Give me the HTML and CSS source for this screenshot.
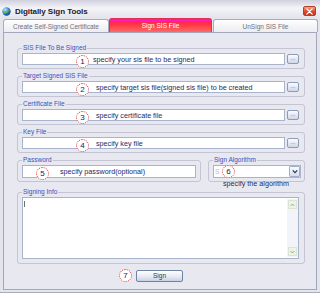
FILE: index.html
```html
<!DOCTYPE html>
<html>
<head>
<meta charset="utf-8">
<link rel="stylesheet" href="styles.css">
</head>
<body>
<div class="window">
  <div class="titlebar">
    <svg class="app-icon" viewBox="0 0 10 10" width="9" height="9">
      <defs>
        <radialGradient id="g1" cx="35%" cy="30%" r="75%">
          <stop offset="0" stop-color="#c8e8ff"/>
          <stop offset="0.6" stop-color="#2a78d0"/>
          <stop offset="1" stop-color="#12408a"/>
        </radialGradient>
      </defs>
      <circle cx="5" cy="5" r="4.6" fill="url(#g1)"/>
      <path d="M1.2 6.5 C3 4.5 5.5 4 8.8 3.2 C7 5.2 4.5 6.8 1.8 7.6 Z" fill="#5cc040"/>
    </svg>
    <span class="title">Digitally Sign Tools</span>
    <span class="close">
      <svg viewBox="0 0 10 8" width="9" height="7"><path d="M2 1 L8 7 M8 1 L2 7" stroke="#fff" stroke-width="1.6" stroke-linecap="round"/></svg>
    </span>
  </div>
  <div class="tabs">
    <div class="tab tab-first">Create Self-Signed Certificate</div>
    <div class="tab active">Sign SIS File</div>
    <div class="tab tab-last">UnSign SIS File</div>
  </div>
  <div class="panel">
    <fieldset class="group">
      <legend>SIS File To Be Signed</legend>
      <div class="row">
        <div class="textbox"><span class="num">1</span><span class="hint">specify your sis file to be signed</span></div>
        <span class="browse">...</span>
      </div>
    </fieldset>
    <fieldset class="group">
      <legend>Target Signed SIS File</legend>
      <div class="row">
        <div class="textbox"><span class="num">2</span><span class="hint hint-wide">specify target sis file(signed sis file) to be created</span></div>
        <span class="browse">...</span>
      </div>
    </fieldset>
    <fieldset class="group">
      <legend>Certificate File</legend>
      <div class="row">
        <div class="textbox"><span class="num">3</span><span class="hint hint-wide">specify certificate file</span></div>
        <span class="browse">...</span>
      </div>
    </fieldset>
    <fieldset class="group">
      <legend>Key File</legend>
      <div class="row">
        <div class="textbox"><span class="num">4</span><span class="hint hint-wide">specify key file</span></div>
        <span class="browse">...</span>
      </div>
    </fieldset>
    <div class="pair">
      <fieldset class="group pw">
        <legend>Password</legend>
        <div class="textbox tall pw-box"><span class="num">5</span><span class="hint pw-hint">specify password(optional)</span></div>
      </fieldset>
      <fieldset class="group algo">
        <legend>Sign Algorithm</legend>
        <div class="combo">
          <span class="combo-text">S</span>
          <span class="num num-over">6</span>
          <span class="drop">
            <svg viewBox="0 0 8 6" width="6" height="5"><path d="M1 1.5 L4 4.5 L7 1.5" fill="none" stroke="#203050" stroke-width="1.5"/></svg>
          </span>
        </div>
        <div class="algo-note">specify the algorithm</div>
      </fieldset>
    </div>
    <fieldset class="group info">
      <legend>Signing Info</legend>
      <div class="textarea">
        <span class="caret"></span>
        <div class="scrollbar">
          <span class="sb-btn">
            <svg viewBox="0 0 8 6" width="5" height="4"><path d="M1 4.5 L4 1.5 L7 4.5" fill="none" stroke="#8a9a80" stroke-width="1.4"/></svg>
          </span>
          <span class="sb-btn">
            <svg viewBox="0 0 8 6" width="5" height="4"><path d="M1 1.5 L4 4.5 L7 1.5" fill="none" stroke="#8a9a80" stroke-width="1.4"/></svg>
          </span>
        </div>
      </div>
    </fieldset>
    <div class="actions">
      <span class="num">7</span>
      <span class="sign">Sign</span>
    </div>
  </div>
</div>
</body>
</html>
```

FILE: styles.css
```css
* { box-sizing: border-box; }

body {
  margin: 0;
  background: #ffffff;
  font-family: "Liberation Sans", Arial, sans-serif;
}

.window {
  width: 320px;
  height: 293px;
  background: #e4e4ec;
  display: flex;
  flex-direction: column;
  border-bottom: 1px solid #a8acbc;
}

.titlebar {
  height: 18px;
  flex: none;
  display: flex;
  align-items: center;
  padding: 4px 4px 0 2px;
  background: linear-gradient(#cfd0dc 0, #f4f4f8 45%, #e4e4ec 100%);
}

.app-icon { flex: none; margin-right: 4px; }

.title {
  font-size: 8px;
  font-weight: bold;
  color: #20202c;
  letter-spacing: -0.05px;
}

.close {
  margin-left: auto;
  width: 13px;
  height: 10px;
  border: 1px solid #b04028;
  border-radius: 2px;
  background: linear-gradient(#f4a088, #e04a2c 55%, #c83018);
  display: flex;
  align-items: center;
  justify-content: center;
}

.tabs {
  height: 14px;
  flex: none;
  display: flex;
  align-items: flex-end;
  padding-left: 3px;
}

.tab {
  height: 13px;
  font-size: 6.5px;
  color: #707080;
  display: flex;
  align-items: center;
  justify-content: center;
  border: 1px solid #a8acbc;
  border-bottom: none;
  border-radius: 3px 3px 0 0;
  background: linear-gradient(#ffffff, #ececf2);
}

.tab-first { width: 106px; }
.tab-last { width: 105px; margin-left: 1px; }

.tab.active {
  width: 103px;
  height: 14px;
  color: #ffffff;
  border-color: #e03050;
  background: linear-gradient(#ff10d0 0, #ff18c0 2px, #ff2a48 3px, #ff3c44 50%, #ff6a6a 100%);
}

.panel {
  flex: 1;
  margin: 0 3px 2px;
  border: 1px solid #a4a8bc;
  background: #e8e8f0;
  padding: 11px 11px 0 13px;
  display: flex;
  flex-direction: column;
}

.group {
  margin: 0 0 3px;
  padding: 1px 5px 3px 4px;
  border: 1px solid #c4c4d2;
  border-radius: 3px;
  min-width: 0;
}

.group legend {
  padding: 0 1px;
  font-size: 6.5px;
  line-height: 8px;
  color: #4050c0;
}

.row {
  display: flex;
  align-items: flex-start;
  gap: 2px;
}

.textbox {
  flex: 1;
  height: 12px;
  background: #ffffff;
  border: 1px solid #a8b4cc;
  display: flex;
  align-items: center;
  padding-left: 53px;
}

.textbox.tall { height: 13px; }

.num {
  flex: none;
  width: 13px;
  height: 13px;
  margin-top: 4px;
  border-radius: 50%;
  border: 1px dotted #e02828;
  background: #ffffff;
  color: #1a2050;
  font-size: 8px;
  display: flex;
  align-items: center;
  justify-content: center;
}

.hint {
  font-size: 7.2px;
  color: #1e2a60;
  margin-left: 4px;
  white-space: nowrap;
}

.hint-wide { margin-left: 7px; }

.browse {
  flex: none;
  width: 12px;
  height: 10px;
  margin-top: 1px;
  border: 1px solid #8c9cb8;
  border-radius: 2px;
  background: linear-gradient(#fbfcff, #d0d6e6);
  font-size: 6px;
  line-height: 7px;
  color: #506080;
  text-align: center;
}

.pair {
  display: flex;
  gap: 7px;
  align-items: flex-start;
}

.pw {
  width: 184px;
  flex: none;
  padding-right: 4px;
}

.pw-box { padding-left: 13px; }
.pw-hint { margin-left: 11px; }

.algo {
  flex: 1;
  position: relative;
  padding-right: 3px;
}

.combo {
  height: 13px;
  background: #ffffff;
  border: 1px solid #a8b4cc;
  display: flex;
  align-items: center;
  position: relative;
}

.combo-text {
  font-size: 6.5px;
  color: #b4bcd4;
  padding-left: 1px;
}

.num-over {
  position: absolute;
  left: 8px;
  top: -5px;
}

.drop {
  margin-left: auto;
  margin-right: 0;
  width: 11px;
  height: 11px;
  border: 1px solid #a0b0cc;
  border-radius: 1px;
  background: linear-gradient(#fafcff, #d4dcea);
  display: flex;
  align-items: center;
  justify-content: center;
}

.algo-note {
  position: absolute;
  left: 14px;
  top: calc(100% - 1px);
  font-size: 7.2px;
  line-height: 8px;
  color: #1e2a60;
  white-space: nowrap;
}

.info {
  margin-top: 3px;
  padding-bottom: 4px;
  padding-right: 5px;
}

.textarea {
  height: 62px;
  background: #ffffff;
  border: 1px solid #a8b4cc;
  display: flex;
  padding: 2px 0 2px 1px;
}

.caret {
  width: 1px;
  height: 6px;
  margin-top: 1px;
  background: #707070;
}

.scrollbar {
  margin-left: auto;
  width: 11px;
  margin-top: -1px;
  margin-bottom: -1px;
  background: #f2f4fa;
  display: flex;
  flex-direction: column;
  justify-content: space-between;
  padding: 1px;
}

.sb-btn {
  width: 9px;
  height: 9px;
  border: 1px solid #dce4d4;
  background: #eef3e8;
  display: flex;
  align-items: center;
  justify-content: center;
}

.actions {
  display: flex;
  align-items: center;
  margin-top: 2px;
  margin-left: 102px;
  gap: 4px;
}

.actions .num { margin-top: 0; }

.sign {
  width: 47px;
  height: 12px;
  border: 1px solid #7282a4;
  border-radius: 2px;
  background: linear-gradient(#ffffff, #e4e8f2 60%, #c8d0e2);
  font-size: 6.5px;
  color: #303848;
  display: flex;
  align-items: center;
  justify-content: center;
}
```
